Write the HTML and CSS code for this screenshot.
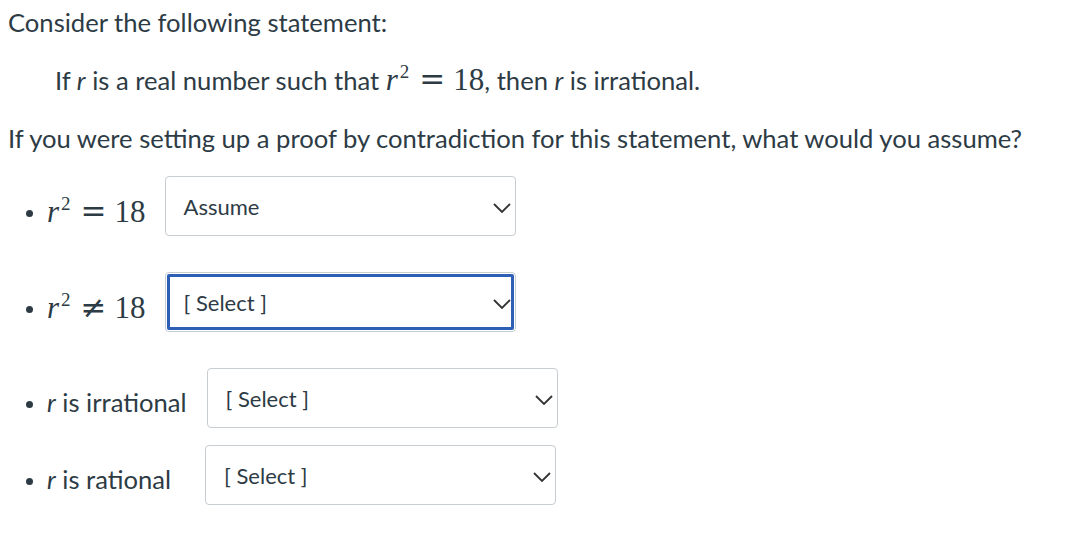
FILE: index.html
```html
<!DOCTYPE html>
<html>
<head>
<meta charset="utf-8">
<link rel="stylesheet" href="styles.css">
</head>
<body>
<p class="line">Consider the following statement:</p>
<p class="line indent">If <i>r</i> is a real number such that <span class="m"><span class="mi">r</span><span class="sup">2</span><span class="rel">=</span>18</span>, then <i>r</i> is irrational.</p>
<p class="line">If you were setting up a proof by contradiction for this statement, what would you assume?</p>
<ul class="list">
  <li class="row math-row">
    <span class="label math-label"><span class="m"><span class="mi">r</span><span class="sup">2</span><span class="rel">=</span>18</span></span>
    <div class="select"><span class="select-text">Assume</span><svg class="chev" width="18" height="10" viewBox="0 0 18 10"><path d="M1 1 L9 9 L17 1" fill="none" stroke="#333" stroke-width="1.8"/></svg></div>
  </li>
  <li class="row math-row">
    <span class="label math-label"><span class="m"><span class="mi">r</span><span class="sup">2</span><span class="rel">&ne;</span>18</span></span>
    <div class="select focused"><span class="select-text">[ Select ]</span><svg class="chev" width="18" height="10" viewBox="0 0 18 10"><path d="M1 1 L9 9 L17 1" fill="none" stroke="#333" stroke-width="1.8"/></svg></div>
  </li>
  <li class="row">
    <span class="label"><i>r</i> is irrational</span>
    <div class="select"><span class="select-text">[ Select ]</span><svg class="chev" width="18" height="10" viewBox="0 0 18 10"><path d="M1 1 L9 9 L17 1" fill="none" stroke="#333" stroke-width="1.8"/></svg></div>
  </li>
  <li class="row">
    <span class="label label-wide"><i>r</i> is rational</span>
    <div class="select"><span class="select-text">[ Select ]</span><svg class="chev" width="18" height="10" viewBox="0 0 18 10"><path d="M1 1 L9 9 L17 1" fill="none" stroke="#333" stroke-width="1.8"/></svg></div>
  </li>
</ul>
</body>
</html>
```

FILE: styles.css
```css
html, body {
  background: #ffffff;
}
body {
  margin: 0;
  padding: 4px 8px 0 8px;
  font-family: Lato, "Open Sans", sans-serif;
  font-size: 25.6px;
  color: #2d3b45;
  line-height: 37px;
}
.line {
  margin: 0 0 21px 0;
}
.line:last-of-type {
  margin-bottom: 0;
}
.indent {
  padding-left: 47px;
}
.m {
  font-family: "Liberation Serif", "DejaVu Serif", serif;
  font-size: 31px;
  line-height: 20px;
  white-space: nowrap;
  color: #2d3b45;
}
.mi {
  font-style: italic;
}
.sup {
  font-size: 19px;
  position: relative;
  top: -12px;
  margin-left: 2px;
}
.rel {
  font-family: "DejaVu Serif", serif;
  margin: 0 8px 0 10px;
}
.list {
  list-style: none;
  margin: 19px 0 0 0;
  padding: 0 0 0 39px;
}
.row {
  position: relative;
  display: flex;
  align-items: center;
  margin-bottom: 17px;
}
.row::before {
  content: "";
  position: absolute;
  left: -21px;
  top: 50%;
  width: 7px;
  height: 7px;
  margin-top: 3px;
  border-radius: 50%;
  background: #2d3b45;
}
.math-row {
  margin-bottom: 36px;
}
.math-row::before {
  margin-top: 4px;
}
.label {
  display: block;
  padding-top: 8px;
  margin-right: 20px;
  white-space: nowrap;
}
.math-label {
  padding-top: 13px;
  margin-right: 19px;
}
.label-wide {
  margin-right: 34px;
}
.select {
  display: flex;
  align-items: center;
  justify-content: space-between;
  box-sizing: border-box;
  width: 351px;
  height: 60px;
  border: 1px solid #c7cdd1;
  border-radius: 4px;
  padding: 0 4px 0 18px;
  font-size: 22px;
  color: #2d3b45;
  background: #fff;
  flex: none;
}
.select.focused {
  outline: 3px solid #2c5fb5;
  outline-offset: -5px;
}
.chev {
  display: block;
  margin-top: 3px;
}
```
